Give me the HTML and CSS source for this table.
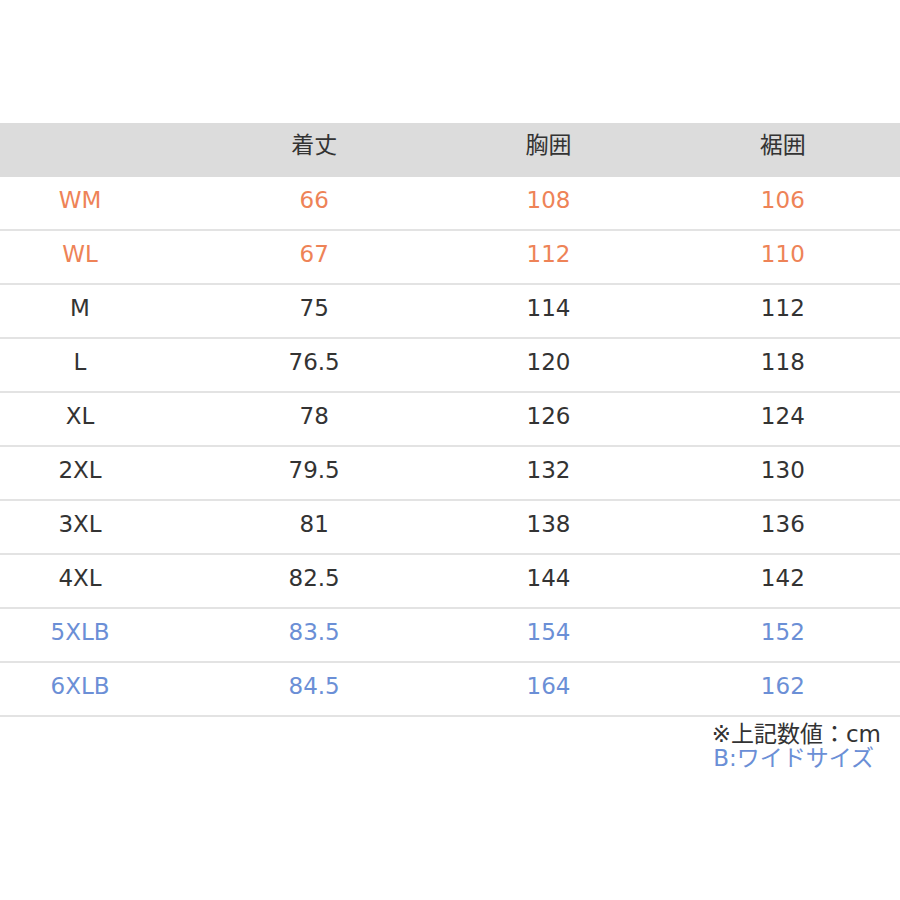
FILE: index.html
```html
<!DOCTYPE html>
<html lang="ja">
<head>
<meta charset="utf-8">
<link rel="stylesheet" href="styles.css">
</head>
<body>
<div class="page">
  <div class="table">
    <div class="row head">
      <div class="cell first"></div>
      <div class="cell">着丈</div>
      <div class="cell">胸囲</div>
      <div class="cell">裾囲</div>
    </div>
    <div class="row orange"><div class="cell first">WM</div><div class="cell">66</div><div class="cell">108</div><div class="cell">106</div></div>
    <div class="row orange"><div class="cell first">WL</div><div class="cell">67</div><div class="cell">112</div><div class="cell">110</div></div>
    <div class="row"><div class="cell first">M</div><div class="cell">75</div><div class="cell">114</div><div class="cell">112</div></div>
    <div class="row"><div class="cell first">L</div><div class="cell">76.5</div><div class="cell">120</div><div class="cell">118</div></div>
    <div class="row"><div class="cell first">XL</div><div class="cell">78</div><div class="cell">126</div><div class="cell">124</div></div>
    <div class="row"><div class="cell first">2XL</div><div class="cell">79.5</div><div class="cell">132</div><div class="cell">130</div></div>
    <div class="row"><div class="cell first">3XL</div><div class="cell">81</div><div class="cell">138</div><div class="cell">136</div></div>
    <div class="row"><div class="cell first">4XL</div><div class="cell">82.5</div><div class="cell">144</div><div class="cell">142</div></div>
    <div class="row blue"><div class="cell first">5XLB</div><div class="cell">83.5</div><div class="cell">154</div><div class="cell">152</div></div>
    <div class="row blue"><div class="cell first">6XLB</div><div class="cell">84.5</div><div class="cell">164</div><div class="cell">162</div></div>
  </div>
  <div class="notes">
    <div class="note">※上記数値：cm</div>
    <div class="note blue-note">B:ワイドサイズ</div>
  </div>
</div>
</body>
</html>
```
FILE: styles.css
```css
html, body {
  margin: 0;
  padding: 0;
  background: #ffffff;
}
body {
  font-family: "DejaVu Sans", "Noto Sans CJK JP", sans-serif;
  color: #333333;
}
.page {
  width: 900px;
  height: 900px;
  padding-top: 123px;
  box-sizing: border-box;
}
.table {
  display: flex;
  flex-direction: column;
}
.row {
  display: grid;
  grid-template-columns: 197px 1fr 1fr 1fr;
  height: 54px;
  border-bottom: 2px solid #e3e3e3;
  box-sizing: border-box;
  align-items: center;
  font-size: 23px;
}
.row.head {
  background: #dcdcdc;
  border-bottom: none;
}
.cell {
  text-align: center;
  line-height: 1;
  padding-bottom: 5px;
}
.row.head .cell {
  padding-bottom: 10px;
}
.cell.first {
  padding-right: 37px;
}
.orange { color: #ee8357; }
.blue { color: #6b8fd6; }
.notes {
  display: flex;
  flex-direction: column;
  align-items: flex-end;
  padding-right: 19px;
  padding-top: 5px;
  font-size: 23px;
  line-height: 24px;
}
.note {
  color: #333333;
}
.blue-note {
  color: #6b8fd6;
  margin-right: 7px;
}
```
